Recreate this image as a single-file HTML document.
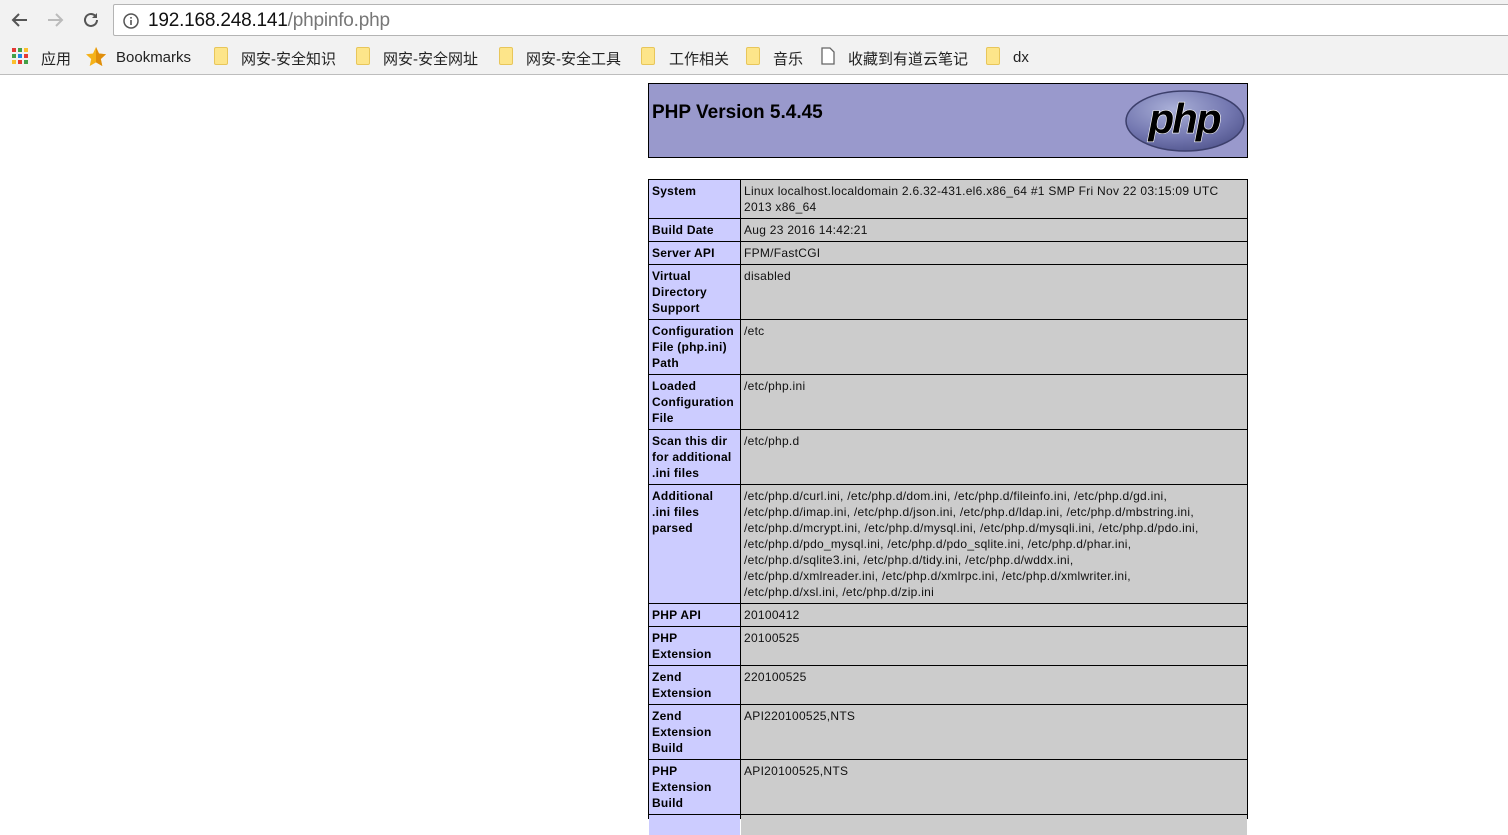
<!DOCTYPE html>
<html><head><meta charset="utf-8">
<style>
*{margin:0;padding:0;box-sizing:border-box}
html,body{width:1508px;height:817px;overflow:hidden;background:#fff;font-family:"Liberation Sans","Noto Sans CJK SC",sans-serif}
.top{position:absolute;left:0;top:0;width:1508px;height:38px;background:#f2f2f2}
.addr{position:absolute;left:113px;top:4px;width:1400px;height:32px;background:#fff;border:1px solid #b4b4b4;border-radius:2px}
.url{position:absolute;left:34px;top:5px;font-size:19px;color:#111;letter-spacing:-0.2px}
.url span{color:#777}
.bm{position:absolute;left:0;top:38px;width:1508px;height:37px;background:#f2f2f2;border-bottom:1px solid #bdbdbd}
.bi{position:absolute;top:10px;font-size:15px;color:#222;white-space:nowrap}
.fold{position:absolute;top:9px;width:14px;height:18px;background:#fde58a;border:1px solid #e8c65a;border-radius:2px}
.hdr{position:absolute;left:648px;top:83px;width:600px;height:75px;background:#9999cc;border:1px solid #000}
.hdr h1{position:absolute;left:3px;top:18px;font-size:19px;font-weight:bold;color:#000}
.tb{position:absolute;left:648px;top:179px;width:600px;height:640px;background:#000}
.c{position:absolute;font-size:12px;line-height:16px;padding:3px 3px;color:#000;white-space:nowrap;overflow:hidden;letter-spacing:0.28px}
.l{left:1px;width:91px;background:#ccccff;font-weight:bold;letter-spacing:0.25px}
.v{left:93px;width:506px;background:#cccccc;color:#111}
</style></head><body>
<div class="top">
<svg style="position:absolute;left:10px;top:10px" width="20" height="20" viewBox="0 0 20 20"><path d="M17 10H4M9 4L3 10l6 6" fill="none" stroke="#555" stroke-width="2"/></svg>
<svg style="position:absolute;left:45px;top:10px" width="20" height="20" viewBox="0 0 20 20"><path d="M3 10h13M11 4l6 6-6 6" fill="none" stroke="#bbb" stroke-width="2"/></svg>
<svg style="position:absolute;left:81px;top:10px" width="20" height="20" viewBox="0 0 20 20"><path d="M16 10a6 6 0 1 1-2-4.5" fill="none" stroke="#555" stroke-width="2"/><path d="M16 3v5h-5z" fill="#555"/></svg>
<div class="addr">
<svg style="position:absolute;left:9px;top:8px" width="16" height="16" viewBox="0 0 16 16"><circle cx="8" cy="8" r="7" fill="none" stroke="#555" stroke-width="1.5"/><rect x="7.2" y="7" width="1.6" height="5" fill="#555"/><rect x="7.2" y="4" width="1.6" height="1.6" fill="#555"/></svg>
<div class="url">192.168.248.141<span>/phpinfo.php</span></div></div>
</div>
<div class="bm">
<svg style="position:absolute;left:12px;top:10px" width="18" height="16" viewBox="0 0 18 16"><g><rect x="0" y="0" width="4" height="4" fill="#e53935"/><rect x="6" y="0" width="4" height="4" fill="#43a047"/><rect x="12" y="0" width="4" height="4" fill="#fbc02d"/><rect x="0" y="6" width="4" height="4" fill="#43a047"/><rect x="6" y="6" width="4" height="4" fill="#1e88e5"/><rect x="12" y="6" width="4" height="4" fill="#e53935"/><rect x="0" y="12" width="4" height="4" fill="#fbc02d"/><rect x="6" y="12" width="4" height="4" fill="#e53935"/><rect x="12" y="12" width="4" height="4" fill="#43a047"/></g></svg>
<div class="bi" style="left:41px">应用</div>
<svg style="position:absolute;left:86px;top:9px" width="20" height="19" viewBox="0 0 20 19"><path d="M10 0l3 6.5 7 .8-5.2 4.7 1.5 7L10 15.4 3.7 19l1.5-7L0 7.3l7-.8z" fill="#f5b21a"/><path d="M10 0l3 6.5 7 .8-5.2 4.7 1.5 7L10 15.4z" fill="#e08e0b"/></svg>
<div class="bi" style="left:116px;top:11px">Bookmarks</div>
<div class="fold" style="left:214px"></div><div class="bi" style="left:241px">网安-安全知识</div>
<div class="fold" style="left:356px"></div><div class="bi" style="left:383px">网安-安全网址</div>
<div class="fold" style="left:499px"></div><div class="bi" style="left:526px">网安-安全工具</div>
<div class="fold" style="left:641px"></div><div class="bi" style="left:669px">工作相关</div>
<div class="fold" style="left:746px"></div><div class="bi" style="left:773px">音乐</div>
<svg style="position:absolute;left:821px;top:9px" width="14" height="18" viewBox="0 0 14 18"><path d="M1 1h8l4 4v12H1z" fill="#fff" stroke="#666" stroke-width="1.3"/></svg>
<div class="bi" style="left:848px">收藏到有道云笔记</div>
<div class="fold" style="left:986px"></div><div class="bi" style="left:1013px;top:11px">dx</div>
</div>

<div class="hdr"><h1>PHP Version 5.4.45</h1>
<svg style="position:absolute;left:475px;top:5px" width="122" height="64" viewBox="0 0 122 64">
<defs><radialGradient id="g" cx="0.4" cy="0.3" r="0.8"><stop offset="0" stop-color="#aab0d8"/><stop offset="0.6" stop-color="#7377b0"/><stop offset="1" stop-color="#4c5088"/></radialGradient></defs>
<ellipse cx="61" cy="32" rx="59" ry="30" fill="url(#g)" stroke="#3c3f6b" stroke-width="1.5"/>
<text x="60" y="44" text-anchor="middle" font-family="Liberation Sans,sans-serif" font-weight="bold" font-style="italic" font-size="42" fill="#000" stroke="#fff" stroke-width="1.2" paint-order="stroke" letter-spacing="-2">php</text>
</svg></div>

<div class="tb">
<div class="c l" style="top:1px;height:38px">System</div><div class="c v" style="top:1px;height:38px">Linux localhost.localdomain 2.6.32-431.el6.x86_64 #1 SMP Fri Nov 22 03:15:09 UTC<br>2013 x86_64</div>
<div class="c l" style="top:40px;height:22px">Build Date</div><div class="c v" style="top:40px;height:22px">Aug 23 2016 14:42:21</div>
<div class="c l" style="top:63px;height:22px">Server API</div><div class="c v" style="top:63px;height:22px">FPM/FastCGI</div>
<div class="c l" style="top:86px;height:54px">Virtual<br>Directory<br>Support</div><div class="c v" style="top:86px;height:54px">disabled</div>
<div class="c l" style="top:141px;height:54px">Configuration<br>File (php.ini)<br>Path</div><div class="c v" style="top:141px;height:54px">/etc</div>
<div class="c l" style="top:196px;height:54px">Loaded<br>Configuration<br>File</div><div class="c v" style="top:196px;height:54px">/etc/php.ini</div>
<div class="c l" style="top:251px;height:54px">Scan this dir<br>for additional<br>.ini files</div><div class="c v" style="top:251px;height:54px">/etc/php.d</div>
<div class="c l" style="top:306px;height:118px">Additional<br>.ini files<br>parsed</div><div class="c v" style="top:306px;height:118px">/etc/php.d/curl.ini, /etc/php.d/dom.ini, /etc/php.d/fileinfo.ini, /etc/php.d/gd.ini,<br>/etc/php.d/imap.ini, /etc/php.d/json.ini, /etc/php.d/ldap.ini, /etc/php.d/mbstring.ini,<br>/etc/php.d/mcrypt.ini, /etc/php.d/mysql.ini, /etc/php.d/mysqli.ini, /etc/php.d/pdo.ini,<br>/etc/php.d/pdo_mysql.ini, /etc/php.d/pdo_sqlite.ini, /etc/php.d/phar.ini,<br>/etc/php.d/sqlite3.ini, /etc/php.d/tidy.ini, /etc/php.d/wddx.ini,<br>/etc/php.d/xmlreader.ini, /etc/php.d/xmlrpc.ini, /etc/php.d/xmlwriter.ini,<br>/etc/php.d/xsl.ini, /etc/php.d/zip.ini</div>
<div class="c l" style="top:425px;height:22px">PHP API</div><div class="c v" style="top:425px;height:22px">20100412</div>
<div class="c l" style="top:448px;height:38px">PHP<br>Extension</div><div class="c v" style="top:448px;height:38px">20100525</div>
<div class="c l" style="top:487px;height:38px">Zend<br>Extension</div><div class="c v" style="top:487px;height:38px">220100525</div>
<div class="c l" style="top:526px;height:54px">Zend<br>Extension<br>Build</div><div class="c v" style="top:526px;height:54px">API220100525,NTS</div>
<div class="c l" style="top:581px;height:54px">PHP<br>Extension<br>Build</div><div class="c v" style="top:581px;height:54px">API20100525,NTS</div>
<div class="c l" style="top:636px;height:20px"></div><div class="c v" style="top:636px;height:20px"></div>
</div>
</body></html>
